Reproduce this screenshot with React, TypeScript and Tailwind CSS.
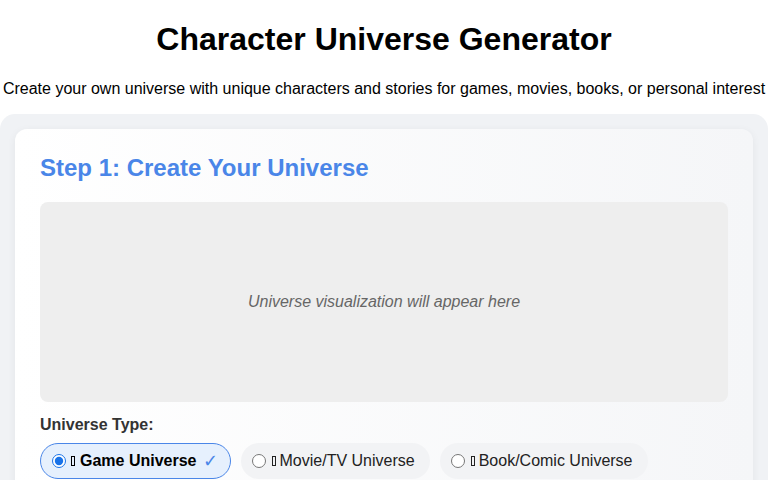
import React from "react";

export default function App() {
  const options = [
    { label: "Game Universe", selected: true },
    { label: "Movie/TV Universe", selected: false },
    { label: "Book/Comic Universe", selected: false },
  ];
  return (
    <div className="min-h-screen bg-white text-black" style={{ fontFamily: '"Liberation Sans", Arial, sans-serif' }}>
      <h1 className="text-center text-[32px] font-bold leading-[37px] pt-[21px] pb-[22px]">Character Universe Generator</h1>
      <p className="text-center text-[16px] leading-[18px] mb-[16px] whitespace-nowrap">
        Create your own universe with unique characters and stories for games, movies, books, or personal interest
      </p>
      <div className="bg-[#f0f2f5] rounded-[15px] p-[15px]">
        <div className="rounded-[12px] bg-gradient-to-r from-white to-[#f5f6f8] shadow-[0_2px_8px_rgba(0,0,0,0.06)] p-[25px]">
          <h2 className="text-[24px] font-bold leading-[28px] text-[#4a86e8] mb-[20px]">Step 1: Create Your Universe</h2>
          <div className="h-[200px] rounded-[8px] bg-[#eeeeee] flex items-center justify-center">
            <span className="italic text-[#666666] text-[16px]">Universe visualization will appear here</span>
          </div>
          <div className="mt-[14px] text-[16px] font-bold text-[#333333] leading-[18px]">Universe Type:</div>
          <div className="mt-[9px] flex gap-[10px]">
            {options.map((o) => (
              <label
                key={o.label}
                className={
                  o.selected
                    ? "h-[36px] flex items-center pl-[11px] pr-[12px] rounded-full border border-[#4a86e8] bg-[#e6f0fd] font-bold text-[16px]"
                    : "h-[36px] flex items-center pl-[10px] pr-[14px] rounded-full border border-transparent bg-[#f2f3f5] text-[16px] text-[#222]"
                }
              >
                <input type="radio" name="utype" defaultChecked={o.selected} className="w-[14px] h-[14px] m-0 accent-[#1a73e8]" />
                <span className={o.selected ? "ml-[5px] inline-block w-[4px] h-[10px] border border-current" : "ml-[6px] inline-block w-[4px] h-[10px] border border-current"}></span>
                <span className={o.selected ? "ml-[5px] whitespace-nowrap" : "ml-[4px] whitespace-nowrap"}>{o.label}</span>
                {o.selected && <span className="text-[#4a86e8] font-normal ml-[6px] text-[18px]">✓</span>}
              </label>
            ))}
          </div>
        </div>
      </div>
    </div>
  );
}
